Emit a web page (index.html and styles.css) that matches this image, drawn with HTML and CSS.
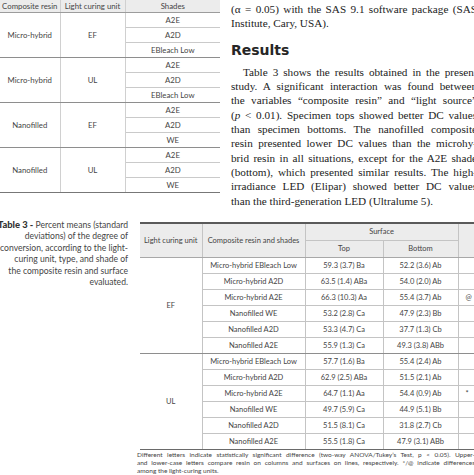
FILE: index.html
```html
<!DOCTYPE html>
<html>
<head>
<meta charset="utf-8">
<link rel="stylesheet" href="styles.css">
</head>
<body>
<div class="page">
  <div class="top">
    <table class="t1">
      <colgroup><col class="c1"><col class="c2"><col class="c3"></colgroup>
      <thead>
        <tr><th>Composite resin</th><th>Light curing unit</th><th class="nb">Shades</th></tr>
      </thead>
      <tbody>
        <tr><td rowspan="3" class="g">Micro-hybrid</td><td rowspan="3" class="g">EF</td><td class="nb">A2E</td></tr>
        <tr><td class="nb">A2D</td></tr>
        <tr class="last"><td class="nb">EBleach Low</td></tr>
        <tr><td rowspan="3" class="g">Micro-hybrid</td><td rowspan="3" class="g">UL</td><td class="nb">A2E</td></tr>
        <tr><td class="nb">A2D</td></tr>
        <tr class="last"><td class="nb">EBleach Low</td></tr>
        <tr><td rowspan="3" class="g">Nanofilled</td><td rowspan="3" class="g">EF</td><td class="nb">A2E</td></tr>
        <tr><td class="nb">A2D</td></tr>
        <tr class="last"><td class="nb">WE</td></tr>
        <tr><td rowspan="3" class="g end">Nanofilled</td><td rowspan="3" class="g end">UL</td><td class="nb">A2E</td></tr>
        <tr><td class="nb">A2D</td></tr>
        <tr class="last end"><td class="nb">WE</td></tr>
      </tbody>
    </table>
    <div class="text">
      <span class="l">(α = 0.05) with the SAS 9.1 software package (SAS</span>
      <span class="l lastl">Institute, Cary, USA).</span>
      <h2 class="head">Results</h2>
      <span class="l ind">Table 3 shows the results obtained in the present</span>
      <span class="l">study. A significant interaction was found between</span>
      <span class="l">the variables “composite resin” and “light source”</span>
      <span class="l">(<i>p</i> &lt; 0.01). Specimen tops showed better DC values</span>
      <span class="l">than specimen bottoms. The nanofilled composite</span>
      <span class="l">resin presented lower DC values than the microhy-</span>
      <span class="l">brid resin in all situations, except for the A2E shade</span>
      <span class="l">(bottom), which presented similar results. The high-</span>
      <span class="l">irradiance LED (Elipar) showed better DC values</span>
      <span class="l lastl">than the third-generation LED (Ultralume 5).</span>
    </div>
  </div>
  <div class="bottom">
    <div class="caption">
      <span><b>Table 3 -</b> Percent means (standard</span>
      <span>deviations) of the degree of</span>
      <span>conversion, according to the light-</span>
      <span>curing unit, type, and shade of</span>
      <span>the composite resin and surface</span>
      <span>evaluated.</span>
    </div>
    <div class="t3wrap">
      <table class="t3">
        <colgroup><col class="d1"><col class="d2"><col class="d3"><col class="d4"><col class="d5"></colgroup>
        <thead>
          <tr class="h1"><th rowspan="2">Light curing unit</th><th rowspan="2">Composite resin and shades</th><th colspan="2" class="surf">Surface</th><th rowspan="2" class="nb"></th></tr>
          <tr class="h2"><th>Top</th><th>Bottom</th></tr>
        </thead>
        <tbody>
          <tr><td rowspan="6" class="unit">EF</td><td>Micro-hybrid EBleach Low</td><td>59.3 (3.7) Ba</td><td>52.2 (3.6) Ab</td><td class="nb"></td></tr>
          <tr><td>Micro-hybrid A2D</td><td>63.5 (1.4) ABa</td><td>54.0 (2.0) Ab</td><td class="nb"></td></tr>
          <tr><td>Micro-hybrid A2E</td><td>66.3 (10.3) Aa</td><td>55.4 (3.7) Ab</td><td class="nb mark">@</td></tr>
          <tr><td>Nanofilled WE</td><td>53.2 (2.8) Ca</td><td>47.9 (2.3) Bb</td><td class="nb"></td></tr>
          <tr><td>Nanofilled A2D</td><td>53.3 (4.7) Ca</td><td>37.7 (1.3) Cb</td><td class="nb"></td></tr>
          <tr class="glast"><td>Nanofilled A2E</td><td>55.9 (1.3) Ca</td><td>49.3 (3.8) ABb</td><td class="nb"></td></tr>
          <tr><td rowspan="6" class="unit end">UL</td><td>Micro-hybrid EBleach Low</td><td>57.7 (1.6) Ba</td><td>55.4 (2.4) Ab</td><td class="nb"></td></tr>
          <tr><td>Micro-hybrid A2D</td><td>62.9 (2.5) ABa</td><td>51.5 (2.1) Ab</td><td class="nb"></td></tr>
          <tr><td>Micro-hybrid A2E</td><td>64.7 (1.1) Aa</td><td>54.4 (0.9) Ab</td><td class="nb mark">*</td></tr>
          <tr><td>Nanofilled WE</td><td>49.7 (5.9) Ca</td><td>44.9 (5.1) Bb</td><td class="nb"></td></tr>
          <tr><td>Nanofilled A2D</td><td>51.5 (8.1) Ca</td><td>31.8 (2.7) Cb</td><td class="nb"></td></tr>
          <tr class="glast end"><td>Nanofilled A2E</td><td>55.5 (1.8) Ca</td><td>47.9 (3.1) ABb</td><td class="nb"></td></tr>
        </tbody>
      </table>
      <div class="note">
        <span class="nl">Different letters indicate statistically significant difference (two-way ANOVA/Tukey’s Test, p &lt; 0.05). Upper-</span>
        <span class="nl">and lower-case letters compare resin on columns and surfaces on lines, respectively. */@ indicate differences</span>
        <span class="nl lastl">among the light-curing units.</span>
      </div>
    </div>
  </div>
</div>
</body>
</html>
```

FILE: styles.css
```css
html, body {
  margin: 0;
  padding: 0;
  background: #ffffff;
}
body {
  width: 474px;
  height: 475px;
  overflow: hidden;
}
.page {
  width: 474px;
  height: 475px;
  overflow: hidden;
}

/* ---------- top section ---------- */
.top {
  display: flex;
  align-items: flex-start;
  height: 222px;
}
.t1 {
  flex: none;
  width: 220px;
  table-layout: fixed;
  border-collapse: collapse;
  font-family: Lato, "Open Sans", sans-serif;
  font-size: 7.8px;
  color: #454545;
}
.t1 .c1 { width: 60px; }
.t1 .c2 { width: 65px; }
.t1 .c3 { width: 95px; }
.t1 th {
  height: 12px;
  padding: 0;
  font-weight: normal;
  background: #ececec;
  border-bottom: 1px solid #9c9c9c;
  border-right: 1px solid #d0d0d0;
  text-align: center;
  line-height: 10px;
}
.t1 td {
  height: 14px;
  padding: 0;
  text-align: center;
  line-height: 10px;
  border-bottom: 1px solid #cacaca;
  border-right: 1px solid #d0d0d0;
}
.t1 td.g,
.t1 tr.last td {
  border-bottom-color: #8e8e8e;
}
.t1 td.end,
.t1 tr.end td {
  border-bottom: 1.5px solid #777777;
}
.t1 .nb {
  border-right: none;
}

.text {
  flex: none;
  width: 246px;
  margin-left: 11px;
  padding-top: 2px;
  font-family: "Liberation Serif", "Times New Roman", serif;
  font-size: 11.2px;
  line-height: 14.3px;
  color: #222222;
}
.text .l {
  display: block;
  text-align: justify;
  text-align-last: justify;
}
.text .l.lastl {
  text-align-last: left;
}
.text .ind {
  text-indent: 12px;
}
.text .head {
  margin: 10.4px 0 5.9px 0;
  font-family: "DejaVu Sans", sans-serif;
  font-weight: bold;
  font-size: 14px;
  line-height: 18px;
  color: #262626;
}

/* ---------- bottom section ---------- */
.bottom {
  display: flex;
  align-items: flex-start;
}
.caption {
  flex: none;
  width: 128px;
  margin-top: -3px;
  display: flex;
  flex-direction: column;
  align-items: flex-end;
  font-family: Lato, "Open Sans", sans-serif;
  font-size: 8.6px;
  line-height: 11.4px;
  color: #454545;
}
.caption span {
  white-space: nowrap;
}
.caption b {
  font-size: 9.4px;
  font-weight: 900;
  color: #333333;
}
.t3wrap {
  flex: none;
  width: 350px;
  margin-left: 12px;
}
.t3 {
  width: 350px;
  table-layout: fixed;
  border-collapse: collapse;
  font-family: Lato, "Open Sans", sans-serif;
  font-size: 7.5px;
  color: #454545;
}
.t3 .d1 { width: 62px; }
.t3 .d2 { width: 103px; }
.t3 .d3 { width: 78px; }
.t3 .d4 { width: 75px; }
.t3 .d5 { width: 32px; }
.t3 thead tr.h1 th {
  border-top: 2px solid #5a5a5a;
}
.t3 th {
  height: 16px;
  padding: 0;
  font-weight: normal;
  background: #ececec;
  border-right: 1px solid #c4c4c4;
  border-bottom: 1px solid #a8a8a8;
  text-align: center;
  line-height: 10px;
}
.t3 th.surf {
  border-bottom: 1px solid #c4c4c4;
}
.t3 td {
  height: 15px;
  padding: 0;
  text-align: center;
  line-height: 10px;
  border-right: 1px solid #c4c4c4;
  border-bottom: 1px solid #c4c4c4;
}
.t3 td.unit {
  border-bottom: 1px solid #8e8e8e;
}
.t3 tr.glast td {
  border-bottom: 1px solid #8e8e8e;
}
.t3 tr.end td,
.t3 td.end {
  border-bottom: 1.5px solid #6a6a6a;
}
.t3 .nb {
  border-right: none;
}
.t3 .mark {
  text-align: left;
  padding-left: 7px;
}

.note {
  width: 338px;
  margin-left: -3px;
  padding-top: 1px;
  font-family: Lato, "Open Sans", sans-serif;
  font-size: 6.5px;
  line-height: 8px;
  color: #454545;
}
.note .nl {
  display: block;
  text-align: justify;
  text-align-last: justify;
}
.note .nl.lastl {
  text-align-last: left;
}
```
